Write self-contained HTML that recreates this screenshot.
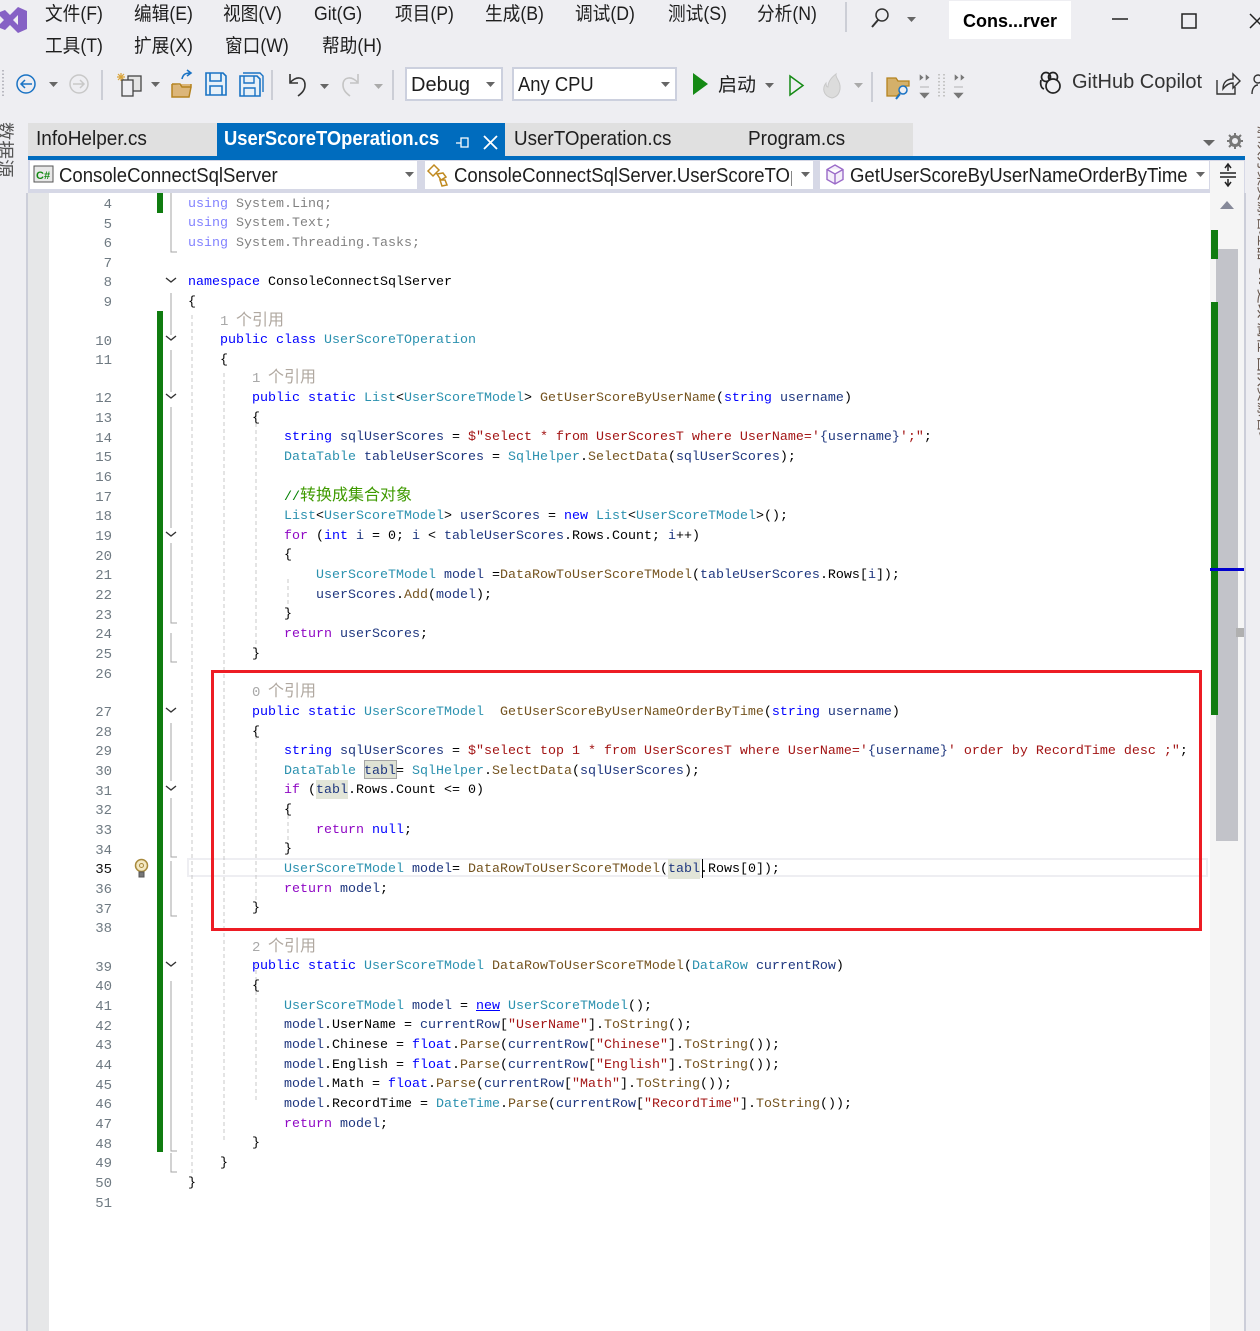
<!DOCTYPE html>
<html><head><meta charset="utf-8"><style>
html,body{margin:0;padding:0}
body{width:1260px;height:1331px;overflow:hidden;position:relative;background:#eeeef2;font-family:"Liberation Sans","Noto Sans CJK SC",sans-serif;color:#1e1e1e}
.a{position:absolute}
.m{position:absolute;font-size:19px;line-height:26px;white-space:pre;color:#1e1e1e;margin-top:1px;transform:scaleX(.93);transform-origin:left center}
.t{position:absolute;top:124px;height:32px;line-height:30px;font-size:20px;white-space:pre;transform:scaleX(.95);transform-origin:left center}
.d{position:absolute;background:#fff;font-size:20px;line-height:30px;white-space:pre;overflow:hidden;top:161px;height:28px}
.d span{transform:scaleX(.928);transform-origin:left center}
.l,.n{position:absolute;height:20px;line-height:20px;font-family:"Liberation Mono","Noto Sans CJK SC",monospace;font-size:13.33px;white-space:pre;color:#000;margin-top:2px}
.n{left:70px;width:42px;text-align:right;color:#6f7a82;font-size:14px;margin-top:1px}
.l.lens{color:#a9a9a9;margin-top:-1px;font-size:14px;letter-spacing:-.4px}
.lens b{font-weight:400;font-size:16px;letter-spacing:0;font-family:"Noto Sans CJK SC",sans-serif;color:#b0a8a0}
i{font-style:normal}
.k{color:#0000ff}.c{color:#2b91af}.s{color:#a31515}.f{color:#74531f}.v{color:#1f377f}.p{color:#8f08c4}.g{color:#008000}
.dim{opacity:.5}
.hl{position:absolute;background:#e2e5d8}
</style></head><body>

<svg class="a" style="left:0;top:4px" width="28" height="32" viewBox="0 0 28 32"><path d="M0 8l5-2 5 5 8-8 9 4v18l-9 4-8-8-5 5-5-2z" fill="#8661c5"/><path d="M18 11l-5 5 5 5z" fill="#eeeef2"/><path d="M0 12l4 4-4 4z" fill="#eeeef2"/></svg>

<div class="m" style="left:45px;top:1px">文件(F)</div>
<div class="m" style="left:134px;top:1px">编辑(E)</div>
<div class="m" style="left:223px;top:1px">视图(V)</div>
<div class="m" style="left:314px;top:1px">Git(G)</div>
<div class="m" style="left:395px;top:1px">项目(P)</div>
<div class="m" style="left:485px;top:1px">生成(B)</div>
<div class="m" style="left:575px;top:1px">调试(D)</div>
<div class="m" style="left:668px;top:1px">测试(S)</div>
<div class="m" style="left:757px;top:1px">分析(N)</div>
<div class="m" style="left:45px;top:33px">工具(T)</div>
<div class="m" style="left:134px;top:33px">扩展(X)</div>
<div class="m" style="left:225px;top:33px">窗口(W)</div>
<div class="m" style="left:322px;top:33px">帮助(H)</div>

<div class="a" style="left:845px;top:2px;width:2px;height:30px;background:#ccced6"></div>
<svg class="a" style="left:868px;top:4px" width="54" height="24"><circle cx="14" cy="11" r="6" fill="none" stroke="#333" stroke-width="1.5"/><path d="M10 16l-6 7" stroke="#333" stroke-width="2"/><path d="M39 13h9l-4.500 5z" fill="#666"/></svg>
<div class="a" style="left:949px;top:1px;width:122px;height:38px;background:#fff;text-align:center;font-weight:700;font-size:18px;line-height:40px;color:#000">Cons...rver</div>
<svg class="a" style="left:1100px;top:8px" width="160" height="26"><path d="M12 11h16" stroke="#222" stroke-width="1.500"/><rect x="82" y="6" width="14" height="14" fill="none" stroke="#222" stroke-width="1.500"/><path d="M150 6l14 14M164 6l-14 14" stroke="#222" stroke-width="1.500"/></svg>

<!-- toolbar -->
<svg class="a" style="left:0;top:62px" width="400" height="44">
<path d="M3 8v28" stroke="#b8b8c0" stroke-width="2" stroke-dasharray="1.500 2"/>
<circle cx="26" cy="22" r="9" fill="none" stroke="#1a73c4" stroke-width="1.500"/><path d="M32 22H21M25 18l-4 4 4 4" fill="none" stroke="#1a73c4" stroke-width="1.500"/>
<path d="M49 20h9l-4.500 5z" fill="#666"/>
<circle cx="79" cy="22" r="9" fill="none" stroke="#c8c8c8" stroke-width="1.500"/><path d="M73 22h11M80 18l4 4-4 4" fill="none" stroke="#c8c8c8" stroke-width="1.500"/>
<path d="M102 8v30" stroke="#ccced6" stroke-width="2"/>
<path d="M117 15h8M121 11v8M118 12l6 6M124 12l-6 6" stroke="#d9a43a" stroke-width="1.200"/>
<rect x="128" y="14" width="13" height="15" fill="#e4e4e4" stroke="#444" stroke-width="1.300"/><rect x="122" y="18" width="11" height="16" fill="#eeeef2" stroke="#444" stroke-width="1.300"/>
<path d="M151 20h9l-4.500 5z" fill="#666"/>
<path d="M172 22h8l2 3h9v-3M172 22v13h17l2-10" fill="#dcb67a" stroke="#b5831f" stroke-width="1.500"/><path d="M182 17c1-5 4-6 8-6M187 8l4 3-4 3" fill="none" stroke="#1a73c4" stroke-width="1.600"/>
<path d="M206 11h17l3 3v19h-20z" fill="#e8f1f8" stroke="#1a73c4" stroke-width="1.600"/><path d="M210 11v8h11v-8M210 33v-9h12v9" fill="none" stroke="#1a73c4" stroke-width="1.600"/>
<path d="M240 14h17l3 3v17h-20z" fill="#e8f1f8" stroke="#1a73c4" stroke-width="1.600"/><path d="M244 14v7h10v-7M244 34v-8h11v8M243 11h17l3 3v16" fill="none" stroke="#1a73c4" stroke-width="1.400"/>
<path d="M272 8v30" stroke="#ccced6" stroke-width="2"/>
<path d="M290 12v9h8M290 21c5-7 15-7 15 2 0 5-3 8-7 11" fill="none" stroke="#333" stroke-width="1.600"/>
<path d="M320 22h9l-4.500 5z" fill="#666"/>
<path d="M358 12v9h-8M358 21c-5-7-15-7-15 2 0 5 3 8 7 11" fill="none" stroke="#c4c4c4" stroke-width="1.600"/>
<path d="M374 22h9l-4.500 5z" fill="#aaa"/>
<path d="M393 8v30" stroke="#ccced6" stroke-width="2"/>
</svg>

<div class="a" style="left:405px;top:67px;width:94px;height:30px;background:#fff;border:2px solid #ccd0de;font-size:20px;line-height:33px;white-space:pre;overflow:hidden"><span style="margin-left:4px">Debug</span></div>
<svg class="a" style="left:485px;top:80px" width="12" height="8"><path d="M1 2h9l-4.500 5z" fill="#666"/></svg>
<div class="a" style="left:512px;top:67px;width:161px;height:30px;background:#fff;border:2px solid #ccd0de;font-size:20px;line-height:33px;white-space:pre;overflow:hidden"><span style="display:inline-block;margin-left:4px;transform:scaleX(.92);transform-origin:left center">Any CPU</span></div>
<svg class="a" style="left:660px;top:80px" width="12" height="8"><path d="M1 2h9l-4.500 5z" fill="#666"/></svg>

<svg class="a" style="left:690px;top:68px" width="20" height="30"><path d="M3 5l15 11-15 11z" fill="#158a15"/></svg>
<div class="m" style="left:718px;top:72px;transform:none">启动</div>
<svg class="a" style="left:762px;top:66px" width="460" height="40">
<path d="M3 17h9l-4.500 5z" fill="#666"/>
<path d="M28 10l13 9.500-13 9.500z" fill="none" stroke="#158a15" stroke-width="1.500"/>
<path d="M70 32c-9-2-10-10-6-15 0 3 1 4 2 4 0-6 4-10 8-13-1 4 5 7 4 15-1 6-4 8-8 9z" fill="#dcdcdc" stroke="#c8c8c8"/>
<path d="M92 17h9l-4.500 5z" fill="#aaa"/>
<path d="M110 6v30" stroke="#ccced6" stroke-width="2"/>
<path d="M125 12h9l2 3h11v5h-5l-5 8-2 2h-10z" fill="#d4b06a" stroke="#b5831f" stroke-width="1.300"/>
<circle cx="141" cy="24" r="4" fill="#eeeef2" stroke="#1a73c4" stroke-width="1.500"/><path d="M138 28l-4 5" stroke="#1a73c4" stroke-width="2"/>
<path d="M158 9l3 2.500-3 2.500zM164 9l3 2.500-3 2.500zM158 21h9M158 27h9l-4.500 5z" fill="#777" stroke="#777" stroke-width=".6"/>
<path d="M177 8v24M182 8v24" stroke="#c4c4c4" stroke-width="2" stroke-dasharray="1.500 2"/>
<path d="M193 9l3 2.500-3 2.500zM199 9l3 2.500-3 2.500zM192 21h9M192 27h9l-4.500 5z" fill="#777" stroke="#777" stroke-width=".6"/>
</svg>
<svg class="a" style="left:1038px;top:70px" width="26" height="26"><circle cx="8" cy="7" r="4.500" fill="none" stroke="#222" stroke-width="1.700"/><circle cx="15" cy="7" r="4.500" fill="none" stroke="#222" stroke-width="1.700"/><path d="M3 10c-1 4 0 8 3 9" fill="none" stroke="#222" stroke-width="1.700"/><circle cx="15" cy="16" r="7" fill="#eeeef2" stroke="#222" stroke-width="1.700"/></svg>
<div class="a" style="left:1072px;top:69px;font-size:20px;line-height:26px;white-space:pre;color:#333">GitHub Copilot</div>
<svg class="a" style="left:1214px;top:70px" width="46" height="26"><path d="M3 10v14h18v-7" fill="none" stroke="#333" stroke-width="1.400"/><path d="M9 19c0-7 4-10 10-10V4l7 7-7 7v-5c-4 0-7 2-10 6z" fill="none" stroke="#333" stroke-width="1.400"/><circle cx="44" cy="9" r="4" fill="none" stroke="#333" stroke-width="1.400"/><path d="M38 24c0-6 3-9 6-9" fill="none" stroke="#333" stroke-width="1.400"/></svg>

<!-- side vertical text -->
<div class="a" style="left:-5px;top:122px;width:19px;font-size:18.500px;line-height:19px;color:#555;writing-mode:vertical-rl;text-orientation:sideways;white-space:nowrap">数据源</div>
<div class="a" style="left:1254px;top:126px;height:310px;width:6px;overflow:hidden"><div style="width:18px;font-size:15px;line-height:18px;color:#6a5a50;writing-mode:vertical-rl;text-orientation:sideways;white-space:nowrap">解决方案资源管理器 Git 更改 属性 团队资源管理器</div></div>

<!-- tabs -->
<div class="a" style="left:28px;top:123px;width:885px;height:33px;background:#e0e0e0"></div>
<div class="a" style="left:217px;top:123px;width:288px;height:33px;background:#006cbe"></div>
<div class="t" style="left:36px">InfoHelper.cs</div>
<div class="t" style="left:224px;color:#fff;font-weight:700;transform:scaleX(.919)">UserScoreTOperation.cs</div>
<svg class="a" style="left:453px;top:132px" width="46" height="20"><path d="M3 11h5M8 6h7v9h-7zM8 6v9" fill="none" stroke="#fff" stroke-width="1.300"/><path d="M31 4l13 13M44 4L31 17" stroke="#fff" stroke-width="1.800"/></svg>
<div class="t" style="left:514px;transform:scaleX(.94)">UserTOperation.cs</div>
<div class="t" style="left:748px">Program.cs</div>
<svg class="a" style="left:1200px;top:130px" width="46" height="24"><path d="M3 10h12l-6 6z" fill="#666"/><circle cx="35" cy="11" r="4.500" fill="none" stroke="#777" stroke-width="3"/><path d="M35 3v3M35 16v3M27 11h3M40 11h3M29 5l2 2M39 15l2 2M41 5l-2 2M31 15l-2 2" stroke="#777" stroke-width="2"/></svg>

<div class="a" style="left:28px;top:156px;width:1217px;height:4px;background:#006cbe"></div>

<!-- nav bar -->
<div class="a" style="left:28px;top:160px;width:1217px;height:33px;background:#d6d8e6"></div>
<div class="d" style="left:30px;width:387px"><span style="position:absolute;left:29px">ConsoleConnectSqlServer</span></div>
<svg class="a" style="left:33px;top:165px" width="22" height="19"><rect x="1" y="1" width="19" height="16" fill="#e8e8e8" stroke="#555"/><text x="3" y="14" font-size="11" font-weight="700" fill="#158a15" font-family="Liberation Sans">C#</text></svg>
<svg class="a" style="left:404px;top:171px" width="12" height="8"><path d="M1 1h9l-4.500 5z" fill="#666"/></svg>
<div class="d" style="left:425px;width:388px"><span style="position:absolute;left:29px;width:364px;overflow:hidden">ConsoleConnectSqlServer.UserScoreTOperation</span></div>
<svg class="a" style="left:426px;top:162px" width="26" height="26"><path d="M2 9l6-6 5 5-6 6zM11 12l6-1 3 4-5 3zM14 18l5 0 2 5-5 1z" fill="#fff" stroke="#c08a20" stroke-width="1.500"/></svg>
<svg class="a" style="left:800px;top:171px" width="12" height="8"><path d="M1 1h9l-4.500 5z" fill="#666"/></svg>
<div class="d" style="left:820px;width:389px"><span style="position:absolute;left:30px;width:364px;overflow:hidden">GetUserScoreByUserNameOrderByTime</span></div>
<svg class="a" style="left:825px;top:163px" width="22" height="24"><path d="M10 2l8 4.500v10L10 21l-8-4.500v-10zM2 6.500L10 11l8-4.500M10 11v10" fill="#f4eefa" stroke="#9a6ac8" stroke-width="1.400"/></svg>
<svg class="a" style="left:1195px;top:171px" width="12" height="8"><path d="M1 1h9l-4.500 5z" fill="#666"/></svg>
<div class="a" style="left:1210px;top:161px;width:34px;height:29px;background:#f5f5f5"></div>
<svg class="a" style="left:1216px;top:162px" width="24" height="26"><path d="M4 11h16M4 15h16M12 2v7M12 17v7" stroke="#222" stroke-width="1.500"/><path d="M9 6l3-4 3 4M9 20l3 4 3-4" fill="none" stroke="#222" stroke-width="1.500"/></svg>

<!-- editor -->
<div class="a" style="left:26px;top:193px;width:1220px;height:1138px;background:#fff;border-left:2px solid #ccced9;border-right:2px solid #ccced9;box-sizing:border-box"></div>
<div class="a" style="left:28px;top:193px;width:21px;height:1138px;background:#e6e7e8"></div>

<!-- scrollbar -->
<div class="a" style="left:1210px;top:190px;width:34px;height:1141px;background:#f5f5f5"></div>
<svg class="a" style="left:1219px;top:198px" width="16" height="12"><path d="M1 11h14L8 3z" fill="#868999"/></svg>
<div class="a" style="left:1216px;top:249px;width:22px;height:592px;background:#c2c3c9"></div>
<div class="a" style="left:1211px;top:230px;width:7px;height:29px;background:#107c10"></div>
<div class="a" style="left:1211px;top:302px;width:7px;height:413px;background:#107c10"></div>
<div class="a" style="left:1210px;top:568px;width:34px;height:3px;background:#0000cd"></div>
<div class="a" style="left:1236px;top:628px;width:8px;height:9px;background:#b0b0b0"></div>

<!-- gutter bars -->
<div class="a" style="left:157px;top:193px;width:6px;height:20px;background:#107c10"></div>
<div class="a" style="left:157px;top:311px;width:6px;height:841px;background:#107c10"></div>

<!-- current line -->
<div class="a" style="left:187px;top:858px;width:1017px;height:15px;border:2px solid #eeeef2;box-sizing:content-box"></div>

<!-- highlights -->
<div class="hl" style="left:364px;top:760px;height:19px;background:#dfe2d4;border:1px solid #a5a5a5;box-sizing:border-box;width:33px"></div>
<div class="hl" style="left:316px;top:780px;width:32px;height:19px"></div>
<div class="hl" style="left:668px;top:859px;width:32px;height:20px"></div>

<!-- fold and indent lines -->
<svg class="a" style="left:160px;top:193px" width="140" height="1020" fill="none">
<g stroke="#a5a5a5" stroke-width="1">
<path d="M11 0v59h6"/>
<path d="M11 100v42M11 157v42"/>
<path d="M11 214v121M11 350v80h6M11 440v29h6"/>
<path d="M11 530v58M11 605v59h6M11 668v55h6"/>
<path d="M11 788v170h6M11 960v19h6"/>
</g>
<g stroke="#333" stroke-width="1.400">
<path d="M6 85l5 4 5-4M6 143l5 4 5-4M6 201l5 4 5-4M6 339l5 4 5-4M6 515l5 4 5-4M6 593l5 4 5-4M6 769l5 4 5-4"/>
</g>
<g stroke="#c8c8c8" stroke-width="1" stroke-dasharray="4 3">
<path d="M32 122v860"/><path d="M64 180v770"/>
<path d="M96 223v240M96 535v175"/>
<path d="M96 770v140"/>
<path d="M128 386v36M128 615v36"/>
</g>
</svg>

<!-- caret -->
<div class="a" style="left:702px;top:859px;width:1px;height:19px;background:#000"></div>

<!-- line numbers -->
<div class="n" style="top:194px">4</div><div class="n" style="top:214px">5</div><div class="n" style="top:233px">6</div><div class="n" style="top:253px">7</div><div class="n" style="top:272px">8</div><div class="n" style="top:292px">9</div>
<div class="n" style="top:331px">10</div><div class="n" style="top:350px">11</div><div class="n" style="top:388px">12</div><div class="n" style="top:408px">13</div><div class="n" style="top:428px">14</div><div class="n" style="top:447px">15</div><div class="n" style="top:467px">16</div><div class="n" style="top:487px">17</div><div class="n" style="top:506px">18</div><div class="n" style="top:526px">19</div><div class="n" style="top:546px">20</div><div class="n" style="top:565px">21</div><div class="n" style="top:585px">22</div><div class="n" style="top:605px">23</div><div class="n" style="top:624px">24</div><div class="n" style="top:644px">25</div><div class="n" style="top:664px">26</div>
<div class="n" style="top:702px">27</div><div class="n" style="top:722px">28</div><div class="n" style="top:741px">29</div><div class="n" style="top:761px">30</div><div class="n" style="top:781px">31</div><div class="n" style="top:800px">32</div><div class="n" style="top:820px">33</div><div class="n" style="top:840px">34</div><div class="n" style="top:859px;color:#111">35</div><div class="n" style="top:879px">36</div><div class="n" style="top:899px">37</div><div class="n" style="top:918px">38</div>
<div class="n" style="top:957px">39</div><div class="n" style="top:976px">40</div><div class="n" style="top:996px">41</div><div class="n" style="top:1016px">42</div><div class="n" style="top:1035px">43</div><div class="n" style="top:1055px">44</div><div class="n" style="top:1075px">45</div><div class="n" style="top:1094px">46</div><div class="n" style="top:1114px">47</div><div class="n" style="top:1134px">48</div><div class="n" style="top:1153px">49</div><div class="n" style="top:1173px">50</div><div class="n" style="top:1193px">51</div>

<svg class="a" style="left:132px;top:858px" width="20" height="22"><circle cx="9.500" cy="7.500" r="6" fill="#f4e9c4" stroke="#a88a3c" stroke-width="1.500"/><circle cx="9.500" cy="7.500" r="2" fill="none" stroke="#a88a3c"/><path d="M7 14h5v5H7z" fill="#777" stroke="#555"/></svg>

<!-- code -->
<div class="l dim" style="left:188px;top:193px"><i class="k">using</i> System.Linq;</div>
<div class="l dim" style="left:188px;top:212px"><i class="k">using</i> System.Text;</div>
<div class="l dim" style="left:188px;top:232px"><i class="k">using</i> System.Threading.Tasks;</div>
<div class="l" style="left:188px;top:271px"><i class="k">namespace</i> ConsoleConnectSqlServer</div>
<div class="l" style="left:188px;top:291px">{</div>
<div class="l lens" style="left:220px;top:309px">1 <b>个引用</b></div>
<div class="l" style="left:220px;top:329px"><i class="k">public class</i> <i class="c">UserScoreTOperation</i></div>
<div class="l" style="left:220px;top:349px">{</div>
<div class="l lens" style="left:252px;top:366px">1 <b>个引用</b></div>
<div class="l" style="left:252px;top:387px"><i class="k">public static</i> <i class="c">List</i>&lt;<i class="c">UserScoreTModel</i>&gt; <i class="f">GetUserScoreByUserName</i>(<i class="k">string</i> <i class="v">username</i>)</div>
<div class="l" style="left:252px;top:407px">{</div>
<div class="l" style="left:284px;top:426px"><i class="k">string</i> <i class="v">sqlUserScores</i> = <i class="s">$"select * from UserScoresT where UserName='</i><i class="v">{username}</i><i class="s">';"</i>;</div>
<div class="l" style="left:284px;top:446px"><i class="c">DataTable</i> <i class="v">tableUserScores</i> = <i class="c">SqlHelper</i>.<i class="f">SelectData</i>(<i class="v">sqlUserScores</i>);</div>
<div class="l g" style="left:284px;top:481px;color:#008000">//<span style="font-size:16px;font-family:'Noto Sans CJK SC',sans-serif;color:#3f9a00">转换成集合对象</span></div>
<div class="l" style="left:284px;top:505px"><i class="c">List</i>&lt;<i class="c">UserScoreTModel</i>&gt; <i class="v">userScores</i> = <i class="k">new</i> <i class="c">List</i>&lt;<i class="c">UserScoreTModel</i>&gt;();</div>
<div class="l" style="left:284px;top:525px"><i class="p">for</i> (<i class="k">int</i> <i class="v">i</i> = 0; <i class="v">i</i> &lt; <i class="v">tableUserScores</i>.Rows.Count; <i class="v">i</i>++)</div>
<div class="l" style="left:284px;top:544px">{</div>
<div class="l" style="left:316px;top:564px"><i class="c">UserScoreTModel</i> <i class="v">model</i> =<i class="f">DataRowToUserScoreTModel</i>(<i class="v">tableUserScores</i>.Rows[<i class="v">i</i>]);</div>
<div class="l" style="left:316px;top:584px"><i class="v">userScores</i>.<i class="f">Add</i>(<i class="v">model</i>);</div>
<div class="l" style="left:284px;top:603px">}</div>
<div class="l" style="left:284px;top:623px"><i class="p">return</i> <i class="v">userScores</i>;</div>
<div class="l" style="left:252px;top:643px">}</div>
<div class="l lens" style="left:252px;top:680px">0 <b>个引用</b></div>
<div class="l" style="left:252px;top:701px"><i class="k">public static</i> <i class="c">UserScoreTModel</i>  <i class="f">GetUserScoreByUserNameOrderByTime</i>(<i class="k">string</i> <i class="v">username</i>)</div>
<div class="l" style="left:252px;top:721px">{</div>
<div class="l" style="left:284px;top:740px"><i class="k">string</i> <i class="v">sqlUserScores</i> = <i class="s">$"select top 1 * from UserScoresT where UserName='</i><i class="v">{username}</i><i class="s">' order by RecordTime desc ;"</i>;</div>
<div class="l" style="left:284px;top:760px"><i class="c">DataTable</i> <i class="v">tabl</i>= <i class="c">SqlHelper</i>.<i class="f">SelectData</i>(<i class="v">sqlUserScores</i>);</div>
<div class="l" style="left:284px;top:779px"><i class="p">if</i> (<i class="v">tabl</i>.Rows.Count &lt;= 0)</div>
<div class="l" style="left:284px;top:799px">{</div>
<div class="l" style="left:316px;top:819px"><i class="p">return</i> <i class="k">null</i>;</div>
<div class="l" style="left:284px;top:838px">}</div>
<div class="l" style="left:284px;top:858px"><i class="c">UserScoreTModel</i> <i class="v">model</i>= <i class="f">DataRowToUserScoreTModel</i>(<i class="v">tabl</i>.Rows[0]);</div>
<div class="l" style="left:284px;top:878px"><i class="p">return</i> <i class="v">model</i>;</div>
<div class="l" style="left:252px;top:897px">}</div>
<div class="l lens" style="left:252px;top:935px">2 <b>个引用</b></div>
<div class="l" style="left:252px;top:955px"><i class="k">public static</i> <i class="c">UserScoreTModel</i> <i class="f">DataRowToUserScoreTModel</i>(<i class="c">DataRow</i> <i class="v">currentRow</i>)</div>
<div class="l" style="left:252px;top:975px">{</div>
<div class="l" style="left:284px;top:995px"><i class="c">UserScoreTModel</i> <i class="v">model</i> = <i class="k" style="text-decoration:underline">new</i> <i class="c">UserScoreTModel</i>();</div>
<div class="l" style="left:284px;top:1014px"><i class="v">model</i>.UserName = <i class="v">currentRow</i>[<i class="s">"UserName"</i>].<i class="f">ToString</i>();</div>
<div class="l" style="left:284px;top:1034px"><i class="v">model</i>.Chinese = <i class="k">float</i>.<i class="f">Parse</i>(<i class="v">currentRow</i>[<i class="s">"Chinese"</i>].<i class="f">ToString</i>());</div>
<div class="l" style="left:284px;top:1054px"><i class="v">model</i>.English = <i class="k">float</i>.<i class="f">Parse</i>(<i class="v">currentRow</i>[<i class="s">"English"</i>].<i class="f">ToString</i>());</div>
<div class="l" style="left:284px;top:1073px"><i class="v">model</i>.Math = <i class="k">float</i>.<i class="f">Parse</i>(<i class="v">currentRow</i>[<i class="s">"Math"</i>].<i class="f">ToString</i>());</div>
<div class="l" style="left:284px;top:1093px"><i class="v">model</i>.RecordTime = <i class="c">DateTime</i>.<i class="f">Parse</i>(<i class="v">currentRow</i>[<i class="s">"RecordTime"</i>].<i class="f">ToString</i>());</div>
<div class="l" style="left:284px;top:1113px"><i class="p">return</i> <i class="v">model</i>;</div>
<div class="l" style="left:252px;top:1132px">}</div>
<div class="l" style="left:220px;top:1152px">}</div>
<div class="l" style="left:188px;top:1172px">}</div>

<!-- red annotation -->
<div class="a" style="left:211px;top:670px;width:991px;height:261px;border:3px solid #ed1c24;box-sizing:border-box"></div>
</body></html>
